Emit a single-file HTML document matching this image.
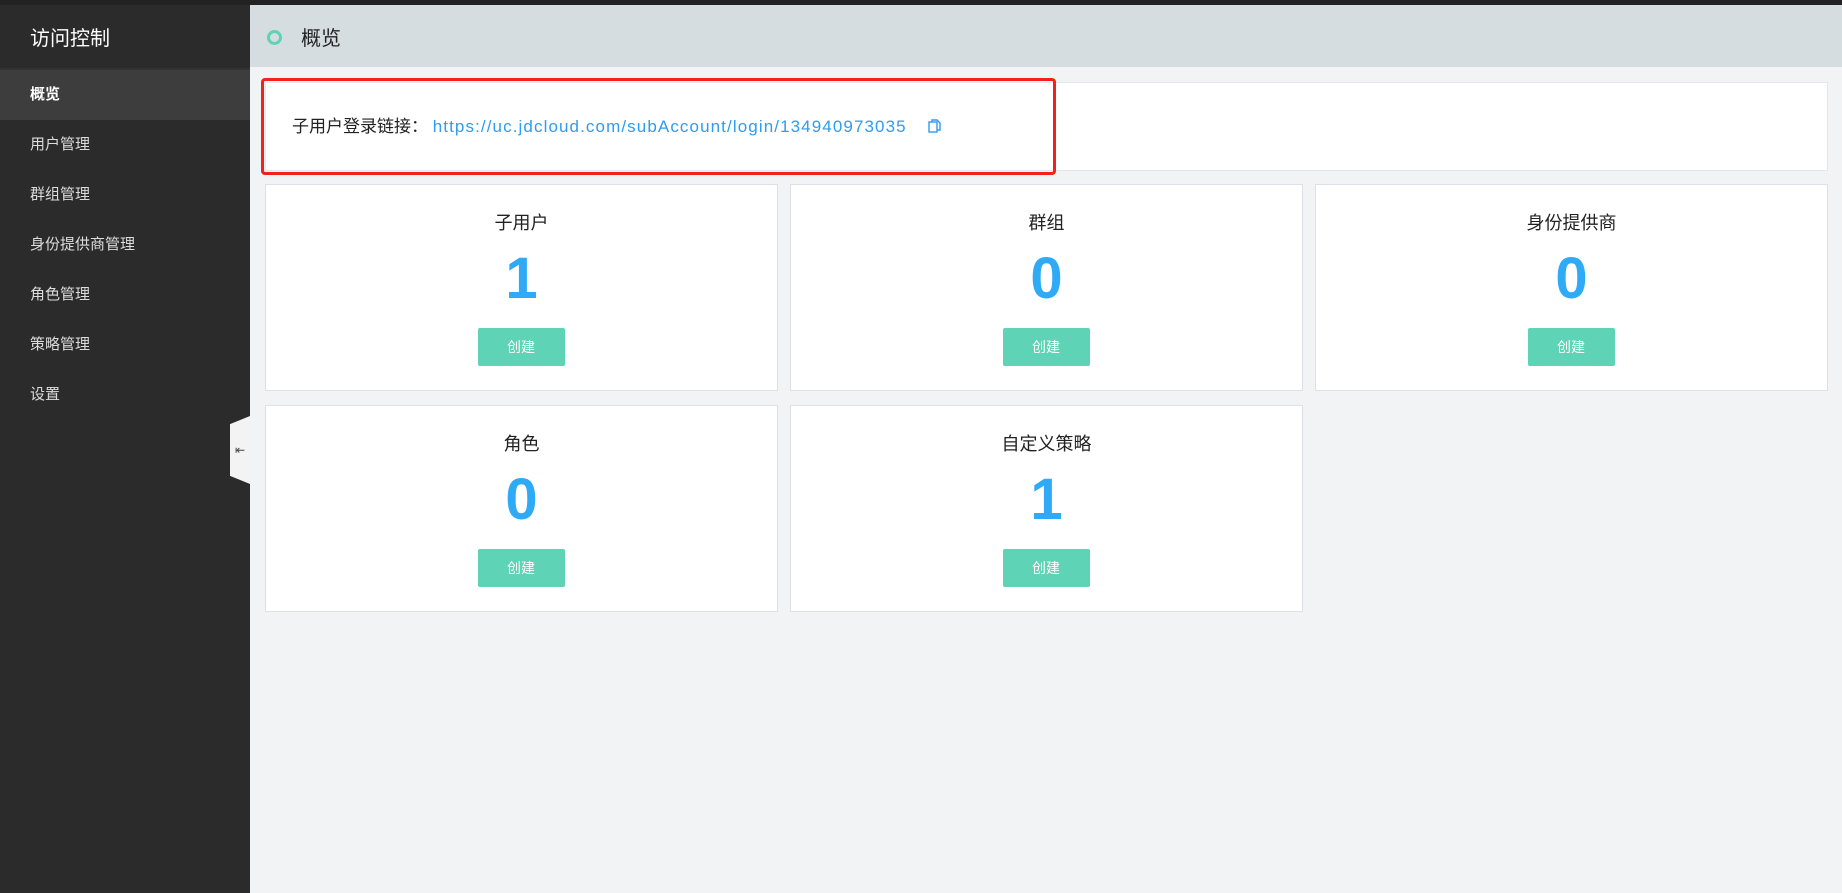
<!DOCTYPE html>
<html><head><meta charset="utf-8"><style>
*{margin:0;padding:0;box-sizing:border-box}
body{width:1842px;height:893px;background:#f2f3f5;font-family:"Liberation Sans","Noto Sans CJK SC",sans-serif;position:relative;overflow:hidden}
.top{position:absolute;left:0;top:0;width:1842px;height:5px;background:#222}
.side{position:absolute;left:0;top:5px;width:250px;height:888px;background:#2b2b2b}
.side h1{position:absolute;left:30px;top:17px;font-size:20px;color:#fff;font-weight:normal}
.side .sep{position:absolute;left:0;top:63px;width:250px;height:2px;background:#333}
.item{position:absolute;left:0;width:250px;height:50px;line-height:50px;padding-left:30px;color:#ddd;font-size:15px}
.item.act{background:#3d3d3d;color:#fff;font-weight:bold}
.tab{position:absolute;left:230px;top:416px;width:20px;height:68px;background:#f3f3f3;clip-path:polygon(0 12%,100% 0,100% 100%,0 88%);font-size:12px;color:#444;text-align:center;line-height:68px}
.hdr{position:absolute;left:250px;top:5px;width:1592px;height:62px;background:#d5dde1}
.hdr .dot{position:absolute;left:17px;top:25px;width:15px;height:15px;border:3px solid #5fd3b5;border-radius:50%}
.hdr span{position:absolute;left:51px;top:17px;font-size:20px;color:#222}
.link{position:absolute;left:265px;top:82px;width:1563px;height:89px;background:#fff;border:1px solid #e3e6ea}
.red{position:absolute;left:261px;top:78px;width:795px;height:97px;border:3px solid #f2211b;border-radius:4px}
.link .l{position:absolute;left:26px;top:29px;font-size:17px;color:#222}
.link .u{color:#2e9cf0;letter-spacing:1.1px}
.card{position:absolute;width:513px;height:207px;background:#fff;border:1px solid #dde1e6;text-align:center}
.card .t{position:absolute;left:0;right:0;top:24px;font-size:18px;color:#222}
.card .n{position:absolute;left:0;right:0;top:60px;font-size:58px;font-weight:bold;color:#2eaaf7}
.card .b{position:absolute;left:50%;margin-left:-44px;top:143px;width:87px;height:38px;line-height:38px;background:#5fd3b5;color:#fff;font-size:14px;border-radius:2px}
</style></head><body>
<div class="top"></div>
<div class="side"><h1>访问控制</h1><div class="sep"></div>
<div class="item act" style="top:65px">概览</div>
<div class="item" style="top:115px">用户管理</div>
<div class="item" style="top:165px">群组管理</div>
<div class="item" style="top:215px">身份提供商管理</div>
<div class="item" style="top:265px">角色管理</div>
<div class="item" style="top:315px">策略管理</div>
<div class="item" style="top:365px">设置</div>
</div>
<div class="tab">⇤</div>
<div class="hdr"><div class="dot"></div><span>概览</span></div>
<div class="link"><div class="l">子用户登录链接：&nbsp;<span class="u">https://uc.jdcloud.com/subAccount/login/134940973035</span>
<svg width="16" height="16" viewBox="0 0 16 16" style="margin-left:16px;vertical-align:-2px"><rect x="2" y="4" width="8" height="10" fill="none" stroke="#2e9cf0" stroke-width="1.4"/><path d="M5 4V2h5l3 3v7h-3" fill="none" stroke="#2e9cf0" stroke-width="1.4"/></svg></div></div>
<div class="red"></div>
<div class="card" style="left:265px;top:184px"><div class="t">子用户</div><div class="n">1</div><div class="b">创建</div></div>
<div class="card" style="left:790px;top:184px"><div class="t">群组</div><div class="n">0</div><div class="b">创建</div></div>
<div class="card" style="left:1315px;top:184px"><div class="t">身份提供商</div><div class="n">0</div><div class="b">创建</div></div>
<div class="card" style="left:265px;top:405px"><div class="t">角色</div><div class="n">0</div><div class="b">创建</div></div>
<div class="card" style="left:790px;top:405px"><div class="t">自定义策略</div><div class="n">1</div><div class="b">创建</div></div>
</body></html>
